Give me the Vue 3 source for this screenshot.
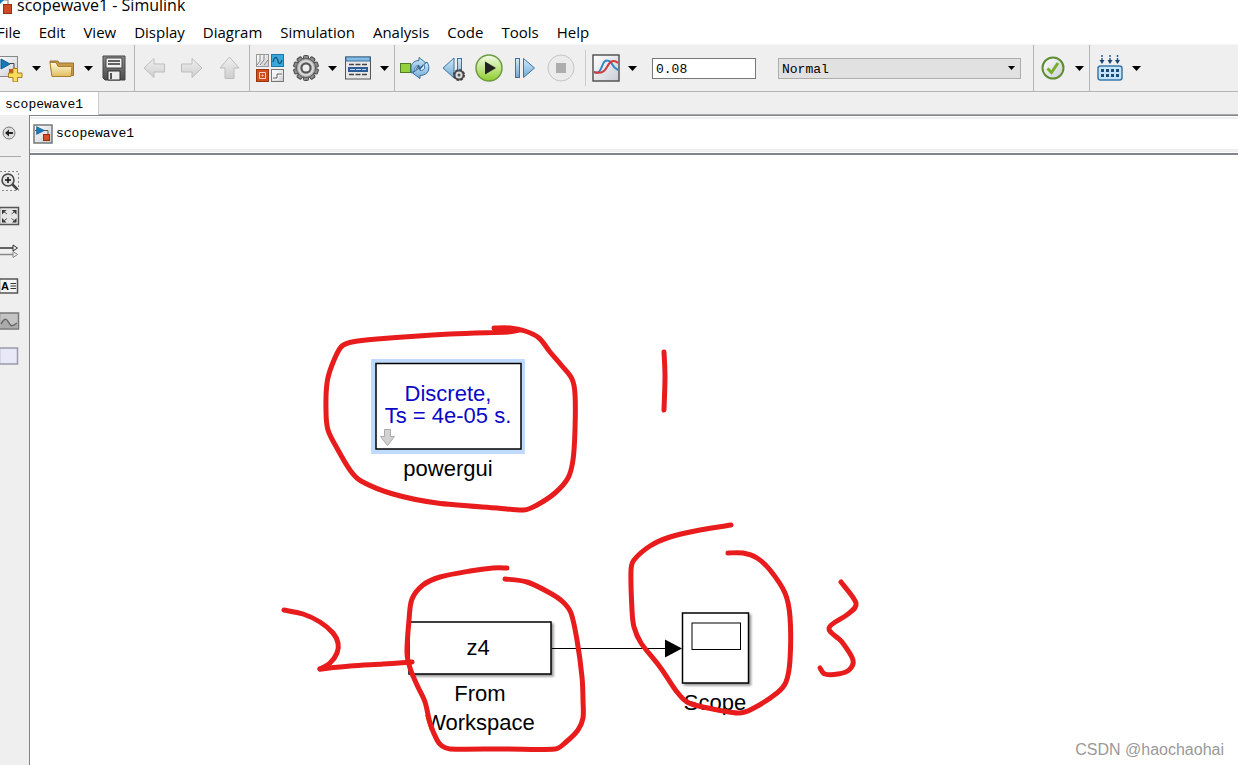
<script setup>
import { ref } from 'vue'

const menus = ['File', 'Edit', 'View', 'Display', 'Diagram', 'Simulation', 'Analysis', 'Code', 'Tools', 'Help']
const stopTime = ref('0.08')
const mode = ref('Normal')

const strokes = [
  [[494, 328], [510, 328], [525, 331], [539, 338], [550, 352], [562, 366], [572, 379], [575, 394], [575, 430], [573, 460], [568, 478], [555, 493], [537, 505], [524, 510], [497, 508], [437, 503], [393, 494], [361, 481], [350, 470], [338, 450], [328, 430], [326, 410], [327, 383], [332, 365], [341, 347], [352, 342], [377, 339], [450, 334], [508, 332], [519, 330]],
  [[664, 352], [665, 377], [664, 410]],
  [[284, 610], [303, 614], [320, 622], [333, 633], [338, 643], [337, 653], [330, 663], [320, 669]],
  [[320, 669], [350, 666], [383, 664], [412, 662]],
  [[507, 568], [493, 568], [470, 571], [440, 577], [423, 585], [412, 599], [409, 620], [407, 653], [410, 668], [417, 685], [425, 702], [430, 723], [437, 740], [442, 746], [450, 749], [503, 749], [555, 749], [566, 742], [578, 730], [583, 718], [583, 700], [582, 677], [577, 640], [571, 613], [563, 602], [550, 593], [527, 582], [505, 579]],
  [[731, 525], [700, 530], [670, 537], [650, 546], [634, 560], [631, 570], [632, 610], [634, 627], [641, 643], [660, 667], [677, 692], [687, 702], [703, 707], [738, 713], [752, 709], [777, 693], [786, 682], [790, 660], [790, 617], [785, 593], [770, 570], [757, 558], [743, 553], [728, 553]],
  [[841, 582], [856, 603], [848, 614], [829, 628], [842, 642], [853, 660], [849, 670], [838, 674], [825, 674], [820, 668]],
]

// Catmull-Rom spline through the pen points, written as cubic segments
function smooth(p) {
  let d = `M${p[0]}`
  for (let i = 0; i < p.length - 1; i++) {
    const a = p[i - 1] || p[i]
    const b = p[i]
    const c = p[i + 1]
    const e = p[i + 2] || c
    // handles are capped by the segment length so that corners do not overshoot
    const len = Math.hypot(c[0] - b[0], c[1] - b[1])
    const k1 = Math.min(1 / 6, len / 2.6 / (Math.hypot(c[0] - a[0], c[1] - a[1]) || 1))
    const k2 = Math.min(1 / 6, len / 2.6 / (Math.hypot(e[0] - b[0], e[1] - b[1]) || 1))
    d += ` C${b[0] + (c[0] - a[0]) * k1},${b[1] + (c[1] - a[1]) * k1} ${c[0] - (e[0] - b[0]) * k2},${c[1] - (e[1] - b[1]) * k2} ${c}`
  }
  return d
}
const teeth = [0, 36, 72, 108, 144, 180, 216, 252, 288, 324]
</script>

<template>
  <div class="window">
    <svg class="defs" width="0" height="0" aria-hidden="true">
      <defs>
        <linearGradient id="paper" x2="1" y2="1"><stop stop-color="#fff" /><stop offset="1" stop-color="#c9cdd4" /></linearGradient>
        <linearGradient id="blue" y2="1" x2="0"><stop stop-color="#d4ebfa" /><stop offset="1" stop-color="#6fa9d4" /></linearGradient>
        <linearGradient id="gold" y2="1" x2="0"><stop stop-color="#fffbe0" /><stop offset="1" stop-color="#e3bd5c" /></linearGradient>
        <linearGradient id="steel" y2="1" x2="0"><stop stop-color="#8c8c8c" /><stop offset="1" stop-color="#4a4a4a" /></linearGradient>
        <linearGradient id="pale" y2="1" x2="0"><stop stop-color="#f0f0f0" /><stop offset="1" stop-color="#cecece" /></linearGradient>
        <linearGradient id="lime" y2="1" x2="0"><stop stop-color="#f4fbe8" /><stop offset=".5" stop-color="#c2e58a" /><stop offset="1" stop-color="#8ccc2c" /></linearGradient>
        <symbol id="model" viewBox="0 0 20 20">
          <rect x="1" y="1" width="18" height="18" fill="url(#paper)" stroke="#777" stroke-width="1.500" />
          <path d="M2 6.500h3M11 6.500h4v4" fill="none" stroke="#555" />
          <path d="M3.500 2.500v8l8-4z" fill="#1679b8" stroke="#145b8c" stroke-width=".6" />
          <rect x="10.500" y="10.500" width="6" height="6" fill="#d4502a" stroke="#98300f" />
        </symbol>
        <symbol id="caret" viewBox="0 0 9 5"><path d="M0 0h9L4.500 5z" fill="#000" /></symbol>
      </defs>
    </svg>

    <header class="title">
      <svg width="14" height="14" viewBox="0 0 14 14"><path d="M0 0h8v4" fill="none" stroke="#777" /><path d="M0 0h4L0 4z" fill="#1679b8" /><rect x="3.500" y="4.500" width="8" height="9" fill="#cf4a24" stroke="#98300f" /></svg>
      <span>scopewave1 - Simulink</span>
    </header>

    <nav class="menu">
      <button v-for="m in menus" :key="m" type="button">{{ m }}</button>
    </nav>

    <div class="toolbar">
      <div class="group first">
        <button class="tool" type="button" aria-label="New model">
          <svg width="30" height="28" viewBox="0 0 30 28">
            <rect x="1.500" y="2.500" width="21" height="20" fill="url(#paper)" stroke="#888" />
            <path d="M6 5v10l9-5z" fill="#1679b8" stroke="#145b8c" /><path d="M15 9.500h4V15" fill="none" stroke="#444" /><rect x="14" y="15" width="5" height="5" fill="#c8502c" />
            <path d="M18 14.500h4.500v4.500H27v4.500h-4.500V28H18v-4.500h-4.500V19H18z" fill="#f8dc5a" stroke="#a8801c" />
          </svg>
        </button>
        <button class="drop" type="button" aria-label="New options"><svg width="9" height="5"><use href="#caret" /></svg></button>
        <button class="tool" type="button" aria-label="Open">
          <svg width="26" height="20" viewBox="0 0 26 20"><path d="M3 17.500L1 3h8l1 2h14.500v12.500z" fill="#c99a45" stroke="#96723a" /><path d="M3 18.500L1 4.500h6l2 4h14l-1 10z" fill="url(#gold)" stroke="#aa8030" /></svg>
        </button>
        <button class="drop" type="button" aria-label="Open options"><svg width="9" height="5"><use href="#caret" /></svg></button>
        <button class="tool" type="button" aria-label="Save">
          <svg width="24" height="26" viewBox="0 0 24 26"><path d="M1 1h22v24H3l-2-2z" fill="url(#steel)" stroke="#444" /><path d="M4 3h16v10H4z" fill="#f2f2f2" stroke="#444" /><path d="M6 6h12M6 9h12" stroke="#333" stroke-width="1.500" /><path d="M6 25v-9h12v9z" fill="#eee" stroke="#333" /><path d="M8 18h2v6H8z" fill="#555" /></svg>
        </button>
      </div>

      <div class="group">
        <button class="tool history" type="button" aria-label="Back"><svg width="24" height="24" viewBox="0 0 24 24"><path d="M2 12L12 2.500V8h10.500v8H12v5.500z" fill="url(#pale)" stroke="#bdbdbd" /></svg></button>
        <button class="tool history" type="button" aria-label="Forward"><svg width="24" height="24" viewBox="0 0 24 24"><path d="M22 12L12 2.500V8H1.500v8H12v5.500z" fill="url(#pale)" stroke="#bdbdbd" /></svg></button>
        <button class="tool history" type="button" aria-label="Up to parent"><svg width="24" height="24" viewBox="0 0 24 24"><path d="M11.500 1L2 12h5v10.500h9V12h5z" fill="url(#pale)" stroke="#bdbdbd" /></svg></button>
      </div>

      <div class="group">
        <button class="tool wide" type="button" aria-label="Library browser">
          <svg width="28" height="28" viewBox="0 0 28 28">
            <rect x=".5" y=".5" width="12" height="12" fill="url(#paper)" stroke="#999" /><rect x="15.500" y=".5" width="12" height="12" fill="#3aa8dc" stroke="#2275a8" /><rect x=".5" y="15.500" width="12" height="12" fill="#d04d1c" stroke="#96350f" /><rect x="15.500" y="15.500" width="12" height="12" fill="url(#paper)" stroke="#777" />
            <path d="M1 11l3-4V1M4 11l4-5V1M8 11l4-5" fill="none" stroke="#888" /><path d="M17 8c2-7 4-5 5-1s3 3 4-1" fill="none" stroke="#14547c" stroke-width="1.300" />
            <path d="M3.500 18.500h6v6h-6zM6 21h1v1H6z" fill="none" stroke="#f6d3c4" /><path d="M17 24h4v-4h5" fill="none" stroke="#fff" stroke-width="3" /><path d="M17 24h4v-4h5" fill="none" stroke="#555" />
          </svg>
        </button>
        <button class="tool" type="button" aria-label="Model configuration">
          <svg width="26" height="26" viewBox="-13 -13 26 26"><g fill="#8a8a8a" stroke="#4c4c4c"><rect v-for="t in teeth" :key="t" x="-2.500" y="-12.500" width="5" height="6" rx="1" :transform="`rotate(${t})`" /></g><circle r="9.500" fill="#b5b5b5" stroke="#5c5c5c" /><circle r="7" fill="none" stroke="#ddd" stroke-width="1.500" /><circle r="4.500" fill="#eee" stroke="#555" stroke-width="2" /></svg>
        </button>
        <button class="drop" type="button" aria-label="Configuration options"><svg width="9" height="5"><use href="#caret" /></svg></button>
        <button class="tool" type="button" aria-label="Model explorer">
          <svg width="26" height="24" viewBox="0 0 26 24"><rect x=".5" y="1" width="25" height="22" fill="#e8e8e8" stroke="#555" /><rect x="1" y="1" width="24" height="4" fill="#83bce5" stroke="#3a7199" /><path d="M4 8.500h18M4 18.500h18" stroke="#444" stroke-width="1.500" stroke-dasharray="5 1.500" /><rect x="3" y="11" width="20" height="5" fill="#2c5d96" /><path d="M5 13.500h16" stroke="#b8d6ef" stroke-dasharray="5 1" /></svg>
        </button>
        <button class="drop" type="button" aria-label="Explorer options"><svg width="9" height="5"><use href="#caret" /></svg></button>
      </div>

      <div class="group simulation">
        <button class="tool wide" type="button" aria-label="Fast restart">
          <svg width="30" height="24" viewBox="0 0 30 24">
            <rect x=".5" y="7.500" width="10" height="9" fill="#93d13f" stroke="#527c23" />
            <path d="M11.500 17C9.500 9 13 4.500 19 4.500V1.500L26 7l-7 5.500V9.500c-3.500 0-4.500 2-4 5z" fill="url(#blue)" stroke="#3a6f9c" />
            <path d="M27 6c4 6 1.500 13.500-7 13.500v3L12.500 17l7.500-5.500v3c4.500 0 5.500-2.500 4-6z" fill="url(#blue)" stroke="#3a6f9c" />
            <path d="M16 13.500l2.500-3.500 1.500 3 3-3.500" fill="none" stroke="#2f628e" stroke-width="1.200" />
          </svg>
        </button>
        <button class="tool step" type="button" aria-label="Step back">
          <svg width="26" height="26" viewBox="0 0 26 26"><path d="M3 13L14 3v20z" fill="url(#blue)" stroke="#3c749f" /><rect x="17.500" y="3.500" width="4" height="19" fill="url(#blue)" stroke="#3c749f" /><circle cx="19" cy="20" r="4.500" fill="#ddd" stroke="#555" stroke-width="2" /><circle cx="19" cy="20" r="5" fill="none" stroke="#444" stroke-width="2" stroke-dasharray="2.300 1.600" /><circle cx="19" cy="20" r="1.500" fill="#555" /></svg>
        </button>
        <button class="tool step" type="button" aria-label="Run">
          <svg width="28" height="28" viewBox="0 0 28 28"><circle cx="14" cy="14" r="13" fill="url(#lime)" stroke="#6f9a45" stroke-width="1.500" /><path d="M10 7.500v13L21 14z" fill="#222" /></svg>
        </button>
        <button class="tool step" type="button" aria-label="Step forward">
          <svg width="22" height="22" viewBox="0 0 22 22"><rect x="1.500" y="1.500" width="4" height="19" fill="url(#blue)" stroke="#3c749f" /><path d="M9.500 1.500v19L20.500 11z" fill="url(#blue)" stroke="#3c749f" /></svg>
        </button>
        <button class="tool step" type="button" aria-label="Stop">
          <svg width="28" height="28" viewBox="0 0 28 28"><circle cx="14" cy="14" r="13" fill="#ebebeb" stroke="#c5c5c5" /><rect x="9" y="9" width="10" height="10" fill="#adadad" /></svg>
        </button>
        <span class="rule"></span>
        <button class="tool" type="button" aria-label="Data inspector">
          <svg width="28" height="28" viewBox="0 0 28 28"><rect x="1" y="1" width="26" height="26" fill="url(#paper)" stroke="#555" stroke-width="1.500" /><path d="M2 18c5 3 7-3 9-8s7-4 9 0 4 5 6 6" fill="none" stroke="#3685c4" stroke-width="2" /><path d="M2 18c6 2 10 1 13-5s7-8 11-4" fill="none" stroke="#cf3c3c" stroke-width="2" /></svg>
        </button>
        <button class="drop" type="button" aria-label="Inspector options"><svg width="9" height="5"><use href="#caret" /></svg></button>
        <input v-model="stopTime" class="time" type="text" aria-label="Simulation stop time" />
        <span class="mode">
          <select v-model="mode" aria-label="Simulation mode"><option>Normal</option><option>Accelerator</option></select>
          <svg width="7" height="4"><use href="#caret" /></svg>
        </span>
      </div>

      <div class="group check">
        <button class="tool" type="button" aria-label="Model advisor">
          <svg width="24" height="24" viewBox="0 0 24 24"><circle cx="12" cy="12" r="10.500" fill="url(#paper)" stroke="#5f8c35" stroke-width="2" /><path d="M6.500 12.500l4 4 6.500-9.500" fill="none" stroke="#79ad28" stroke-width="3" /></svg>
        </button>
        <button class="drop" type="button" aria-label="Advisor options"><svg width="9" height="5"><use href="#caret" /></svg></button>
      </div>

      <div class="group build">
        <button class="tool" type="button" aria-label="Build model">
          <svg width="26" height="28" viewBox="0 0 26 28"><path d="M5 1v6M13 1v6M20.500 1v6" stroke="#285d8d" stroke-width="1.500" stroke-dasharray="2 1" /><path d="M2.500 6h5L5 10zM10.500 6h5L13 10zM18 6h5l-2.500 4z" fill="#17456f" /><rect x="1" y="12" width="24" height="14" rx="2.500" fill="#c5e4fa" stroke="#3878a9" stroke-width="1.500" /><path d="M4 16.500h18M4 21.500h18" stroke="#1c4c79" stroke-width="3" stroke-dasharray="3 2" /></svg>
        </button>
        <button class="drop" type="button" aria-label="Build options"><svg width="9" height="5"><use href="#caret" /></svg></button>
      </div>
    </div>

    <div class="tabs"><button class="tab" type="button">scopewave1</button></div>

    <div class="body">
      <aside class="palette">
        <button type="button" aria-label="Hide browser"><svg width="20" height="20" viewBox="0 0 20 20"><circle cx="9" cy="10" r="6" fill="#ddd" stroke="#777" /><path d="M5 10l4-3.500V9h4v2H9v2.500z" fill="#222" /></svg></button>
        <span class="line"></span>
        <button type="button" aria-label="Zoom"><svg width="20" height="20" viewBox="0 0 20 20"><path d="M0 .5h18.500v19H0" fill="none" stroke="#888" stroke-dasharray="2 2" /><circle cx="8" cy="9" r="6" fill="#e2e2e2" stroke="#444" stroke-width="1.500" /><path d="M5 9h6M8 6v6" stroke="#111" stroke-width="1.500" /><path d="M12.500 13.500l5 5" stroke="#444" stroke-width="2.500" /></svg></button>
        <button type="button" aria-label="Fit to view"><svg width="20" height="20" viewBox="0 0 20 20"><rect x="-.5" y="1.500" width="19" height="17" fill="#e5e5e5" stroke="#555" stroke-width="1.500" /><path d="M2 4h4.500L2 8.500zM16.500 4H12l4.500 4.500zM2 16.500h4.500L2 12zM16.500 16.500H12l4.500-4.500z" fill="#333" /><path d="M3 5l4 3M15.500 5l-4 3M3 15.500l4-3M15.500 15.500l-4-3" stroke="#555" /></svg></button>
        <button type="button" aria-label="Sample time"><svg width="20" height="20" viewBox="0 0 20 20"><path d="M0 7h13" stroke="#333" stroke-width="1.500" /><path d="M13 4l4.500 3-4.500 3z" fill="#eee" stroke="#333" /><path d="M0 13.500h13" stroke="#888" stroke-width="1.500" /><path d="M13 10.500l4.500 3-4.500 3z" fill="#eee" stroke="#888" /></svg></button>
        <button type="button" aria-label="Annotation"><svg width="20" height="20" viewBox="0 0 20 20"><rect x="-.5" y="3" width="18" height="14" fill="#f5f5f5" stroke="#555" stroke-width="1.500" /><text x="1" y="14" class="letter">A</text><path d="M10.500 7.500H16M10.500 10H16M10.500 12.500H16" stroke="#333" /></svg></button>
        <button type="button" aria-label="Image"><svg width="20" height="20" viewBox="0 0 20 20"><rect x="-.5" y="2" width="19" height="16" fill="#c4c4c4" stroke="#777" stroke-width="1.500" /><path d="M1 13c4-7 6-5 8-1s4 3 8 0v5H1z" fill="#aaa" /><path d="M1 13c4-7 6-5 8-1s4 3 8 0" fill="none" stroke="#666" stroke-width="1.500" /></svg></button>
        <button type="button" aria-label="Area"><svg width="20" height="20" viewBox="0 0 20 20"><rect x="-.5" y="2" width="18" height="16" fill="#e9e8f8" stroke="#9a9aa8" stroke-width="1.500" /></svg></button>
      </aside>

      <main class="editor">
        <div class="crumbs"><div class="crumb"><svg width="20" height="20"><use href="#model" /></svg><span>scopewave1</span></div></div>
        <div class="canvas">
          <svg class="diagram" width="1208" height="610" viewBox="30 155 1208 610">
            <rect x="371" y="359" width="154" height="95" fill="#c0dafc" />
            <rect x="376" y="363.500" width="145" height="85.500" fill="#fff" stroke="#000" stroke-width="1.500" />
            <path d="M384.500 429.500h6v7h4l-7 9-7-9h4z" fill="#d2d2d2" stroke="#aaa" />
            <g class="value"><text x="448" y="401">Discrete,</text><text x="448" y="423">Ts = 4e-05 s.</text></g>
            <text x="448" y="476">powergui</text>

            <rect class="block" x="409" y="622" width="142" height="52" />
            <text x="478" y="655">z4</text><text x="480" y="701">From</text><text x="480" y="730">Workspace</text>
            <path d="M552 648.500h114" stroke="#000" /><path d="M665 639.500v18l17-9z" />
            <rect class="block" x="682.500" y="613" width="66" height="70" />
            <rect x="692" y="623" width="48.500" height="26.500" fill="#fff" stroke="#000" />
            <text x="715" y="710">Scope</text>

            <path v-for="(s, i) in strokes" :key="i" class="ink" :d="smooth(s)" />
          </svg>
          <span class="credit">CSDN @haochaohai</span>
        </div>
      </main>
    </div>
  </div>
</template>

<style>
html, body { height: 100%; overflow: hidden; }
#app { height: 100%; }
</style>

<style scoped>
.window { display: flex; flex-direction: column; height: 100%; min-height: 480px; background: #fff; color: #000; font-family: "Open Sans", "Noto Sans", sans-serif; font-size: 15px; overflow: hidden; }
.defs { position: absolute; }
button { border: 0; margin: 0; padding: 0; background: transparent; color: inherit; font: inherit; }
svg { display: block; flex: none; }
.title { display: flex; gap: 3px; height: 20px; flex: none; font-size: 16px; line-height: 10px; white-space: nowrap; }
.menu { display: flex; gap: 18px; height: 24px; flex: none; margin-left: -3px; line-height: 24px; }
.toolbar { display: flex; height: 46px; flex: none; border-top: 1px solid #f5f5f5; border-bottom: 1px solid #b4b4b4; background: #efefef; }
.group { display: flex; align-items: center; flex: none; border-right: 1px solid #b4b4b4; }
.first { margin-left: -6px; padding-right: 4px; }
.tool { display: flex; flex: none; align-items: center; justify-content: center; width: 32px; height: 32px; }
.drop { display: flex; flex: none; align-items: center; justify-content: center; width: 20px; height: 32px; }
.history { width: 38px; }
.wide { width: 40px; }
.step { width: 36px; }
.simulation { padding-right: 12px; }
.rule { width: 1px; height: 36px; margin: 0 4px 0 6px; background: #ccc; }
.time { box-sizing: border-box; width: 104px; height: 21px; margin: 0 22px 0 10px; padding: 2px 3px 0; border: 1px solid #777; border-radius: 0; background: #fff; font: 13px/17px "Liberation Mono", monospace; }
.mode { position: relative; width: 243px; height: 21px; }
.mode select { display: block; appearance: none; box-sizing: border-box; width: 100%; height: 21px; padding: 2px 3px 0; border: 1px solid #adadad; border-radius: 0; background: #e1e1e1; color: #000; font: 13px/17px "Liberation Mono", monospace; }
.mode svg { position: absolute; top: 8px; right: 6px; pointer-events: none; }
.check { padding-left: 3px; }
.build { padding-left: 4px; border: 0; }
.tabs { height: 22px; flex: none; border-bottom: 1px solid #a9a9a9; background: #efefef; }
.tab { display: block; height: 23px; padding: 2px 15px 0 5px; border-right: 1px solid #ccc; background: #fff; font: 13px/21px "Liberation Mono", monospace; }
.body { display: flex; flex: 1; min-height: 0; }
.palette { display: flex; flex-direction: column; width: 29px; flex: none; background: #efefef; }
.palette button { display: flex; align-items: center; height: 35px; flex: none; }
.line { width: 21px; height: 1px; flex: none; margin: 6px 0; background: #aaa; }
.letter { font: bold 11px "Liberation Sans", sans-serif; }
.editor { display: flex; flex: 1; flex-direction: column; min-width: 0; border-left: 1px solid #80858c; border-top: 1px solid #80858c; }
.crumbs { flex: none; padding: 1px 0; border-bottom: 2px solid #80858c; }
.crumb { display: flex; align-items: center; gap: 3px; height: 30px; padding-left: 3px; border-top: 2px solid #f0f0f0; border-bottom: 3px solid #efefef; font: 13px/22px "Liberation Mono", monospace; }
.canvas { position: relative; flex: 1; min-height: 0; overflow: hidden; background: #fff; }
.diagram { font: 22px "Liberation Sans", Arial, sans-serif; text-anchor: middle; }
.value { fill: #0b07c8; }
.block { fill: #fff; stroke: #000; stroke-width: 1.5px; filter: drop-shadow(2px 2px 1px #999); }
.ink { fill: none; stroke: #e81c1c; stroke-width: 5px; stroke-linecap: round; stroke-linejoin: round; }
.credit { position: absolute; right: 14px; bottom: 5px; color: #999; font: 16px/20px "Liberation Sans", sans-serif; }
</style>
